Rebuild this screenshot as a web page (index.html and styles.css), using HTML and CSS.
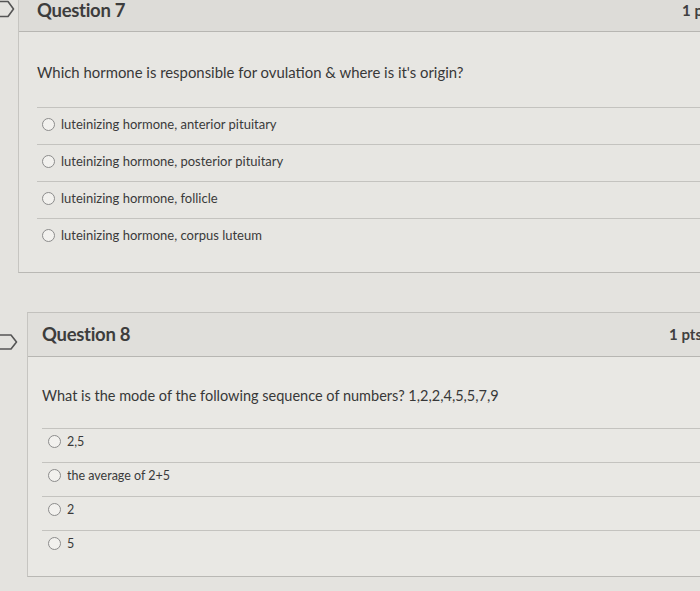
FILE: index.html
```html
<!DOCTYPE html>
<html>
<head>
<meta charset="utf-8">
<link rel="stylesheet" href="styles.css">
</head>
<body>
<div class="page">
  <section class="qrow q7">
    <div class="gutter gutter-7">
      <svg class="flag flag-7" width="15" height="18" viewBox="0 0 15 18"><path d="M-6 1.5 H8 L13.5 9 L8 16.5 H-6" fill="none" stroke="#555" stroke-width="1.6" stroke-linejoin="round"/></svg>
    </div>
    <div class="card">
      <div class="head head-7">
        <span class="title">Question 7</span>
        <span class="pts">1 pts</span>
      </div>
      <div class="body body-7">
        <p class="qtext qtext-7">Which hormone is responsible for ovulation &amp; where is it's origin?</p>
        <ul class="answers answers-7">
          <li><span class="radio"></span>luteinizing hormone, anterior pituitary</li>
          <li><span class="radio"></span>luteinizing hormone, posterior pituitary</li>
          <li><span class="radio"></span>luteinizing hormone, follicle</li>
          <li><span class="radio"></span>luteinizing hormone, corpus luteum</li>
        </ul>
      </div>
    </div>
  </section>

  <section class="qrow q8">
    <div class="gutter gutter-8">
      <svg class="flag flag-8" width="18" height="18" viewBox="0 0 18 18"><path d="M-6 2 H11 L16.5 9 L11 16 H-6" fill="none" stroke="#555" stroke-width="1.6" stroke-linejoin="round"/></svg>
    </div>
    <div class="card">
      <div class="head head-8">
        <span class="title">Question 8</span>
        <span class="pts">1 pts</span>
      </div>
      <div class="body body-8">
        <p class="qtext">What is the mode of the following sequence of numbers? 1,2,2,4,5,5,7,9</p>
        <ul class="answers answers-8">
          <li><span class="radio"></span>2,5</li>
          <li><span class="radio"></span>the average of 2+5</li>
          <li><span class="radio"></span>2</li>
          <li><span class="radio"></span>5</li>
        </ul>
      </div>
    </div>
  </section>
</div>
</body>
</html>
```

FILE: styles.css
```css
* { box-sizing: border-box; }
html, body {
  margin: 0;
  padding: 0;
  height: 100%;
  overflow: hidden;
}
body {
  background: #e4e3df;
  font-family: Lato, "Open Sans", "Liberation Sans", sans-serif;
  color: #3b3b3b;
}
.page {
  display: flex;
  flex-direction: column;
  gap: 39px;
  width: 760px;
}
.qrow {
  display: flex;
  align-items: flex-start;
}
.gutter {
  flex: none;
  display: flex;
}
.gutter-7 { width: 18px; padding-top: 0; }
.gutter-8 { width: 27px; padding-top: 21px; }
.card {
  flex: 1;
  border-left: 1px solid #c6c5c1;
  border-bottom: 1px solid #b9b8b4;
  background: #e7e6e2;
}
.q8 .card {
  border-top: 1px solid #c2c1bd;
  background: #e9e8e4;
}
.head {
  display: flex;
  justify-content: space-between;
  align-items: center;
  border-bottom: 1px solid #b7b6b2;
  background: #dddcd8;
}
.head-7 {
  height: 32px;
  padding: 0 45px 12px 18px;
}
.head-8 {
  height: 44px;
  padding: 0 58px 2px 14px;
  background: #e0dfdb;
}
.title {
  font-size: 18.5px;
  font-weight: 700;
  color: #3d3d3d;
  letter-spacing: -0.3px;
}
.pts {
  font-size: 15px;
  font-weight: 700;
  color: #404040;
}
.body-7 { padding: 30px 0 17px 18px; }
.body-8 { padding: 29px 0 12px 14px; }
.qtext {
  margin: 0;
  font-size: 14.5px;
  line-height: 20px;
  color: #383838;
}
.qtext-7 { font-size: 14.9px; }
.answers {
  list-style: none;
  margin: 0;
  padding: 0;
}
.answers-7 { margin-top: 25px; }
.answers-8 { margin-top: 22px; }
.answers li {
  display: flex;
  align-items: center;
  gap: 6px;
  border-top: 1px solid #c4c3bf;
  font-size: 13px;
  color: #3a3a3a;
}
.answers-7 li { height: 37px; padding: 0 0 4px 5px; }
.answers-8 li { height: 34px; padding: 0 0 8px 6px; font-size: 12.5px; }
.radio {
  flex: none;
  width: 13px;
  height: 13px;
  border-radius: 50%;
  border: 1.5px solid #8c8c8c;
  background: #f2f1ee;
}
```
